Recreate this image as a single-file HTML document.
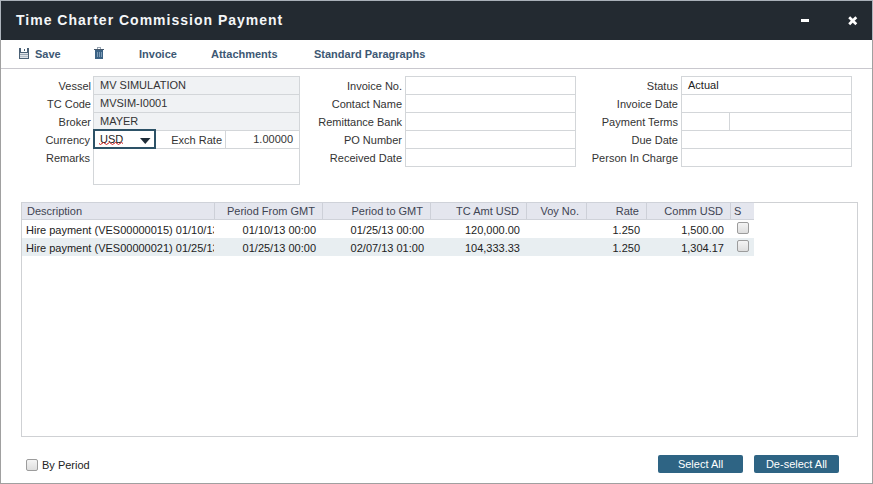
<!DOCTYPE html>
<html><head><meta charset="utf-8">
<style>
*{box-sizing:border-box}
html,body{margin:0;padding:0;width:873px;height:484px;overflow:hidden;background:#fff}
body{font-family:"Liberation Sans",sans-serif;font-size:11px;color:#333;position:relative}
.a{position:absolute;white-space:nowrap;line-height:18px}
#win{position:absolute;left:0;top:0;width:873px;height:484px;border:1px solid #a0a0a0;border-top-color:#a9b0b8}
#title{position:absolute;left:1px;top:1px;width:871px;height:39px;background:#232a31}
.ttl{position:absolute;left:16px;top:11px;font-weight:bold;font-size:14px;letter-spacing:1px;color:#f4f6f8;line-height:18px;white-space:nowrap}
#tb{position:absolute;left:1px;top:40px;width:871px;height:29px;border-bottom:1px solid #c9c8ce}
.tbt{font-weight:bold;color:#3d5874;top:45px}
.lbl{text-align:right;color:#333}
.box{position:absolute;border:1px solid #d3d6d9}
.hl{position:absolute;height:1px;background:#d3d6d9}
.vl{position:absolute;width:1px;background:#d3d6d9}
.ro{background:#f0f2f4}
.gh{position:absolute;top:202px;height:18px;background:#e4e6ee;border-top:1px solid #cfd2d9;border-bottom:1px solid #cfd2d9}
.gs{position:absolute;top:203px;height:16px;width:1px;background:#cdd0d8}
.ght{color:#3e4452;text-align:right}
.cell{text-align:right;color:#222}
.cb{position:absolute;width:12px;height:12px;border:1px solid #9c9c9c;border-radius:2px;background:linear-gradient(#f4f4f4,#dedede)}
.btn{position:absolute;top:455px;height:18px;background:#2e6484;border-radius:2px;color:#fff;text-align:center;line-height:18px}
</style></head><body>
<div id="win"></div>
<div id="title"></div>
<div style="position:absolute;left:0;top:0;width:1px;height:40px;background:#adb4bc"></div>
<div style="position:absolute;left:872px;top:0;width:1px;height:40px;background:#adb4bc"></div>
<div class="ttl">Time Charter Commission Payment</div>
<!-- min / close -->
<div style="position:absolute;left:801px;top:19px;width:8px;height:3px;background:#fff"></div>
<svg style="position:absolute;left:847px;top:15px" width="12" height="12" viewBox="0 0 12 12"><path d="M2.2 2.2L9.3 9.3M9.3 2.2L2.2 9.3" stroke="#fff" stroke-width="2.7" stroke-linecap="butt"/></svg>

<div id="tb"></div>
<!-- save icon -->
<svg style="position:absolute;left:19px;top:48px" width="10" height="11" viewBox="0 0 10 11" shape-rendering="crispEdges">
<path d="M0 0H9L10 1V11H0Z" fill="#4b6176"/>
<rect x="2" y="0" width="6" height="4" fill="#fff"/>
<rect x="5" y="1" width="1" height="2" fill="#4b6176"/>
<rect x="1" y="5" width="8" height="5" fill="#dfe3e8"/>
<rect x="1" y="6" width="8" height="1" fill="#9aa7b4"/>
<rect x="1" y="8" width="8" height="1" fill="#b5bfc9"/>
</svg>
<div class="a tbt" style="left:35px">Save</div>
<!-- trash icon -->
<svg style="position:absolute;left:93px;top:47px" width="12" height="12" viewBox="0 0 12 12" shape-rendering="crispEdges">
<rect x="4" y="0" width="4" height="1" fill="#9aa6b2"/>
<rect x="4" y="1" width="1" height="1" fill="#9aa6b2"/>
<rect x="7" y="1" width="1" height="1" fill="#9aa6b2"/>
<rect x="1" y="2" width="10" height="1" fill="#44576a"/>
<rect x="2" y="3" width="8" height="9" fill="#3b6284"/>
<rect x="4" y="5" width="1" height="5" fill="#7d9cb8"/>
<rect x="6" y="5" width="1" height="5" fill="#7d9cb8"/>
<rect x="8" y="5" width="1" height="5" fill="#7d9cb8"/>
</svg>
<div class="a tbt" style="left:139px">Invoice</div>
<div class="a tbt" style="left:211px">Attachments</div>
<div class="a tbt" style="left:314px">Standard Paragraphs</div>

<!-- left form -->
<div class="a lbl" style="right:782px;top:77px">Vessel</div>
<div class="a lbl" style="right:782px;top:95px">TC Code</div>
<div class="a lbl" style="right:782px;top:113px">Broker</div>
<div class="a lbl" style="right:783px;top:131px">Currency</div>
<div class="a lbl" style="right:783px;top:149px">Remarks</div>
<div class="box ro" style="left:93px;top:76px;width:207px;height:55px"></div>
<div class="hl" style="left:93px;top:94px;width:207px"></div>
<div class="hl" style="left:93px;top:112px;width:207px"></div>
<div class="box" style="left:93px;top:130px;width:207px;height:55px"></div>
<div class="vl" style="left:225px;top:130px;height:18px"></div>
<div class="hl" style="left:93px;top:148px;width:207px"></div>
<div class="a" style="left:100px;top:76px;color:#333">MV SIMULATION</div>
<div class="a" style="left:100px;top:94px;color:#333">MVSIM-I0001</div>
<div class="a" style="left:100px;top:112px;color:#333">MAYER</div>
<div style="position:absolute;left:93px;top:129px;width:63px;height:20px;border:2px solid #2d5267;background:#fff"></div>
<div class="a" style="left:100px;top:130px;color:#222">USD</div>
<svg style="position:absolute;left:99px;top:142px" width="25" height="4" viewBox="0 0 25 4"><path d="M0 1.5Q1.5 3.5 3 1.5T6 1.5T9 1.5T12 1.5T15 1.5T18 1.5T21 1.5T24 1.5" stroke="#d02020" stroke-width="1" fill="none"/></svg>
<svg style="position:absolute;left:140px;top:138px" width="11" height="6" viewBox="0 0 11 6"><path d="M0 0H10.5L5.25 6Z" fill="#1f2d38"/></svg>
<div class="a lbl" style="right:651px;top:131px">Exch Rate</div>
<div class="a" style="right:580px;top:130px;color:#333">1.00000</div>

<!-- middle form -->
<div class="a lbl" style="right:471px;top:77px">Invoice No.</div>
<div class="a lbl" style="right:471px;top:95px">Contact Name</div>
<div class="a lbl" style="right:471px;top:113px">Remittance Bank</div>
<div class="a lbl" style="right:471px;top:131px">PO Number</div>
<div class="a lbl" style="right:471px;top:149px">Received Date</div>
<div class="box" style="left:405px;top:76px;width:171px;height:91px"></div>
<div class="hl" style="left:405px;top:94px;width:171px"></div>
<div class="hl" style="left:405px;top:112px;width:171px"></div>
<div class="hl" style="left:405px;top:130px;width:171px"></div>
<div class="hl" style="left:405px;top:148px;width:171px"></div>

<!-- right form -->
<div class="a lbl" style="right:195px;top:77px">Status</div>
<div class="a lbl" style="right:195px;top:95px">Invoice Date</div>
<div class="a lbl" style="right:195px;top:113px">Payment Terms</div>
<div class="a lbl" style="right:195px;top:131px">Due Date</div>
<div class="a lbl" style="right:195px;top:149px">Person In Charge</div>
<div class="box" style="left:681px;top:76px;width:171px;height:91px"></div>
<div class="hl" style="left:681px;top:94px;width:171px"></div>
<div class="hl" style="left:681px;top:112px;width:171px"></div>
<div class="hl" style="left:681px;top:130px;width:171px"></div>
<div class="hl" style="left:681px;top:148px;width:171px"></div>
<div class="vl" style="left:729px;top:112px;height:18px"></div>
<div class="a" style="left:688px;top:76px;color:#222">Actual</div>

<!-- grid -->
<div class="box" style="left:21px;top:202px;width:837px;height:235px;border-color:#cfd1d4"></div>
<div class="gh" style="left:22px;width:732px"></div>
<div style="position:absolute;left:22px;top:238px;width:732px;height:18px;background:#e8eef1"></div>
<div class="gs" style="left:214px"></div>
<div class="gs" style="left:322px"></div>
<div class="gs" style="left:430px"></div>
<div class="gs" style="left:526px"></div>
<div class="gs" style="left:586px"></div>
<div class="gs" style="left:646px"></div>
<div class="gs" style="left:730px"></div>
<div class="a ght" style="left:27px;top:202px;text-align:left">Description</div>
<div class="a ght" style="right:558px;top:202px">Period From GMT</div>
<div class="a ght" style="right:450px;top:202px">Period to GMT</div>
<div class="a ght" style="right:354px;top:202px">TC Amt USD</div>
<div class="a ght" style="right:294px;top:202px">Voy No.</div>
<div class="a ght" style="right:234px;top:202px">Rate</div>
<div class="a ght" style="right:150px;top:202px">Comm USD</div>
<div class="a ght" style="left:734px;top:202px;text-align:left">S</div>

<div class="a" style="left:26px;top:221px;width:188px;overflow:hidden;color:#222">Hire payment (VES00000015) 01/10/13 00:00 - 01/25/13 00:00</div>
<div class="a cell" style="right:557px;top:221px">01/10/13 00:00</div>
<div class="a cell" style="right:449px;top:221px">01/25/13 00:00</div>
<div class="a cell" style="right:353px;top:221px">120,000.00</div>
<div class="a cell" style="right:233px;top:221px">1.250</div>
<div class="a cell" style="right:149px;top:221px">1,500.00</div>
<div class="cb" style="left:737px;top:222px"></div>

<div class="a" style="left:26px;top:239px;width:188px;overflow:hidden;color:#222">Hire payment (VES00000021) 01/25/13 00:00 - 02/07/13 01:00</div>
<div class="a cell" style="right:557px;top:239px">01/25/13 00:00</div>
<div class="a cell" style="right:449px;top:239px">02/07/13 01:00</div>
<div class="a cell" style="right:353px;top:239px">104,333.33</div>
<div class="a cell" style="right:233px;top:239px">1.250</div>
<div class="a cell" style="right:149px;top:239px">1,304.17</div>
<div class="cb" style="left:737px;top:240px"></div>

<!-- bottom -->
<div class="cb" style="left:26px;top:459px"></div>
<div class="a" style="left:42px;top:456px;color:#222">By Period</div>
<div class="btn" style="left:658px;width:85px">Select All</div>
<div class="btn" style="left:754px;width:85px">De-select All</div>
</body></html>
